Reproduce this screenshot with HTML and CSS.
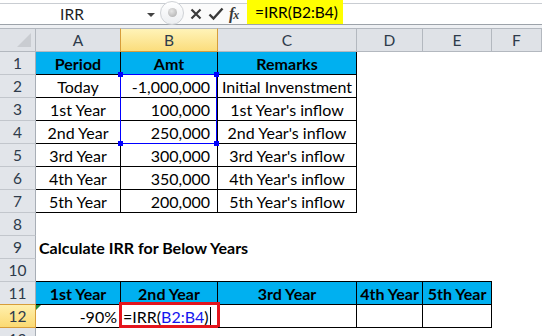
FILE: index.html
```html
<!DOCTYPE html>
<html>
<head>
<meta charset="utf-8">
<link rel="stylesheet" href="styles.css">
</head>
<body>
<div class="fbar">
  <div class="namebox"><span class="nb-text">IRR</span><span class="nb-arrow"></span></div>
  <div class="fb-btns">
    <span class="dotbtn"><span class="dot"></span></span>
    <svg class="ico" width="14" height="14" viewBox="0 0 14 14"><path d="M2.5 2.5 L11.5 11.5 M11.5 2.5 L2.5 11.5" stroke="#3a3a3a" stroke-width="2.2" fill="none"/></svg>
    <svg class="ico" width="16" height="14" viewBox="0 0 16 14"><path d="M1.5 7.5 L5.5 11.5 L14.5 1.5" stroke="#3a3a3a" stroke-width="2.4" fill="none"/></svg>
    <span class="fx">f<span class="fx-x">x</span></span>
  </div>
  <div class="fb-input"><span class="hl">=IRR(B2:B4)</span></div>
</div>
<div class="band"></div>
<div class="sheet">
  <!-- header row -->
  <div class="corner"><svg width="16" height="16" viewBox="0 0 16 16"><path d="M15 1 L15 15 L1 15 Z" fill="#c9ccd1"/></svg></div>
  <div class="ch">A</div><div class="ch sel">B</div><div class="ch">C</div><div class="ch">D</div><div class="ch">E</div><div class="ch">F</div>
  <!-- 1 -->
  <div class="rh">1</div>
  <div class="t hd">Period</div><div class="t hd">Amt</div><div class="t hd">Remarks</div><div class="c"></div><div class="c"></div><div class="c"></div>
  <!-- 2 -->
  <div class="rh">2</div>
  <div class="t">Today</div><div class="t num">-1,000,000<div class="refbox"><span class="h tl"></span><span class="h tr"></span><span class="h bl"></span><span class="h br"></span></div></div><div class="t">Initial Invenstment</div><div class="c"></div><div class="c"></div><div class="c"></div>
  <!-- 3 -->
  <div class="rh">3</div>
  <div class="t">1st Year</div><div class="t num">100,000</div><div class="t">1st Year's inflow</div><div class="c"></div><div class="c"></div><div class="c"></div>
  <!-- 4 -->
  <div class="rh">4</div>
  <div class="t">2nd Year</div><div class="t num">250,000</div><div class="t">2nd Year's inflow</div><div class="c"></div><div class="c"></div><div class="c"></div>
  <!-- 5 -->
  <div class="rh">5</div>
  <div class="t">3rd Year</div><div class="t num">300,000</div><div class="t">3rd Year's inflow</div><div class="c"></div><div class="c"></div><div class="c"></div>
  <!-- 6 -->
  <div class="rh">6</div>
  <div class="t">4th Year</div><div class="t num">350,000</div><div class="t">4th Year's inflow</div><div class="c"></div><div class="c"></div><div class="c"></div>
  <!-- 7 -->
  <div class="rh">7</div>
  <div class="t">5th Year</div><div class="t num">200,000</div><div class="t">5th Year's inflow</div><div class="c"></div><div class="c"></div><div class="c"></div>
  <!-- 8 -->
  <div class="rh">8</div>
  <div class="c"></div><div class="c"></div><div class="c"></div><div class="c"></div><div class="c"></div><div class="c"></div>
  <!-- 9 -->
  <div class="rh">9</div>
  <div class="c title">Calculate IRR for Below Years</div><div class="c"></div><div class="c"></div><div class="c"></div><div class="c"></div><div class="c"></div>
  <!-- 10 -->
  <div class="rh">10</div>
  <div class="c bb"></div><div class="c bb"></div><div class="c bb"></div><div class="c bb"></div><div class="c bb"></div><div class="c"></div>
  <!-- 11 -->
  <div class="rh">11</div>
  <div class="t hd">1st Year</div><div class="t hd">2nd Year</div><div class="t hd">3rd Year</div><div class="t hd">4th Year</div><div class="t hd">5th Year</div><div class="c"></div>
  <!-- 12 -->
  <div class="rh sel">12</div>
  <div class="t pct"><span class="err"></span>-90%</div>
  <div class="t edit">=IRR(<span class="ref">B2:B4</span>)<span class="caret"></span><span class="redbox"></span></div>
  <div class="t"></div><div class="t"></div><div class="t"></div><div class="c"></div>
  <!-- 13 -->
  <div class="rh">13</div>
  <div class="c"></div><div class="c"></div><div class="c"></div><div class="c"></div><div class="c"></div><div class="c"></div>
</div>
</body>
</html>
```
FILE: styles.css
```css
* { box-sizing: border-box; }
html, body { margin: 0; padding: 0; }
body {
  width: 542px;
  height: 336px;
  overflow: hidden;
  background: #ffffff;
  font-family: Lato, "Open Sans", sans-serif;
  font-size: 16px;
  color: #000;
}

/* formula bar */
.fbar {
  display: flex;
  height: 25px;
  padding-top: 3px;
  background: #ffffff;
  border-bottom: 1px solid #9da3aa;
}
.namebox {
  width: 160px;
  position: relative;
  display: flex;
  align-items: center;
  justify-content: center;
  border-top: 1px solid #c9cdd2;
  font-size: 15.5px;
  color: #1e1e1e;
}
.nb-text { margin-left: -16px; }
.nb-arrow {
  position: absolute;
  right: 5px;
  top: 9px;
  width: 0; height: 0;
  border-left: 4px solid transparent;
  border-right: 4px solid transparent;
  border-top: 4px solid #444;
}
.fb-btns {
  width: 87px;
  display: flex;
  align-items: center;
  gap: 5px;
  border-top: 1px solid #c9cdd2;
  background: #fbfbfb;
}
.dotbtn {
  width: 24px;
  height: 24px;
  margin-top: -3px;
  border-radius: 50%;
  border: 1px solid #cfd2d6;
  background: linear-gradient(#ffffff, #eceef1);
  display: flex;
  align-items: center;
  justify-content: center;
}
.dot {
  width: 9px; height: 9px;
  border-radius: 50%;
  background: radial-gradient(circle at 40% 35%, #e6e6e6, #a9a9a9);
}
.ico { display: block; }
.fx {
  font-family: "Liberation Serif", serif;
  font-style: italic;
  font-weight: bold;
  font-size: 16px;
  color: #3a3a3a;
  letter-spacing: -1px;
}
.fx-x { font-size: 12px; }
.fb-input {
  flex: 1;
  border-top: 1px solid #c9cdd2;
  display: flex;
  align-items: stretch;
}
.hl {
  background: #ffff00;
  width: 96px;
  margin-top: -4px;
  height: 24px;
  padding-left: 8px;
  display: flex;
  align-items: center;
  font-size: 15.5px;
  color: #000;
}
.band {
  height: 3px;
  background: #eef0f3;
}

/* sheet grid */
.sheet {
  display: grid;
  grid-template-columns: 36px 85px 97px 139px 66px 69px 1fr;
  grid-template-rows: 24px;
  grid-auto-rows: 23px;
}
.corner {
  background: #dfe2e7;
  border-right: 1px solid #b3b8bf;
  border-bottom: 1px solid #b3b8bf;
  border-top: 1px solid #b3b8bf;
  display: flex;
  align-items: flex-end;
  justify-content: flex-end;
  padding: 0 3px 3px 0;
}
.ch {
  background: #dfe2e7;
  border-right: 1px solid #b3b8bf;
  border-bottom: 1px solid #b3b8bf;
  border-top: 1px solid #b3b8bf;
  display: flex;
  align-items: center;
  justify-content: center;
  font-size: 15.5px;
  color: #2e3b4b;
}
.ch.sel {
  background: linear-gradient(#fff3b8, #fbdd7c);
  border-right-color: #d79d3a;
  border-bottom-color: #d79d3a;
  border-left: 1px solid #d79d3a;
  margin-left: -1px;
}
.rh {
  background: #e2e5ea;
  border-right: 1px solid #a8aeb6;
  border-bottom: 1px solid #c2c6cc;
  display: flex;
  align-items: center;
  justify-content: center;
  font-size: 15.5px;
  color: #2e3b4b;
}
.rh.sel {
  background: linear-gradient(#fff0ad, #fbda73);
  border-right-color: #d79d3a;
  border-bottom-color: #d79d3a;
  border-top: 1px solid #d79d3a;
  margin-top: -1px;
}
.c {
  display: flex;
  align-items: center;
  white-space: nowrap;
  min-width: 0;
}
.t {
  display: flex;
  align-items: center;
  justify-content: center;
  white-space: nowrap;
  min-width: 0;
  border-right: 1px solid #000;
  border-bottom: 1px solid #000;
  position: relative;
}
.bb { border-bottom: 1px solid #000; }
.hd {
  background: #00b0f0;
  font-weight: bold;
}
.num {
  justify-content: flex-end;
  padding-right: 7px;
}
.pct {
  justify-content: flex-end;
  padding-right: 3px;
}
.title {
  font-weight: bold;
  padding-left: 3px;
  overflow: visible;
  z-index: 1;
}
.edit {
  justify-content: flex-start;
  padding-left: 2px;
}
.ref { color: #1515ee; }
.caret {
  width: 1px;
  height: 19px;
  background: #000;
  margin-left: 1px;
}
.redbox {
  position: absolute;
  left: -2px;
  top: -3px;
  right: -3px;
  bottom: -1px;
  border: 3px solid #e4151c;
}
.err {
  position: absolute;
  left: 0;
  top: 0;
  width: 0; height: 0;
  border-top: 5px solid #1e8a3a;
  border-right: 5px solid transparent;
}

/* formula reference range B2:B4 */
.refbox {
  position: absolute;
  left: -1px;
  right: 0;
  top: -1px;
  height: 70px;
  border: 1px solid #0000ff;
  pointer-events: none;
  z-index: 2;
}
.h {
  position: absolute;
  width: 5px;
  height: 5px;
  background: #0000ff;
}
.tl { left: -3px; top: -3px; }
.tr { right: -3px; top: -3px; }
.bl { left: -3px; bottom: -3px; }
.br { right: -3px; bottom: -3px; }
```
